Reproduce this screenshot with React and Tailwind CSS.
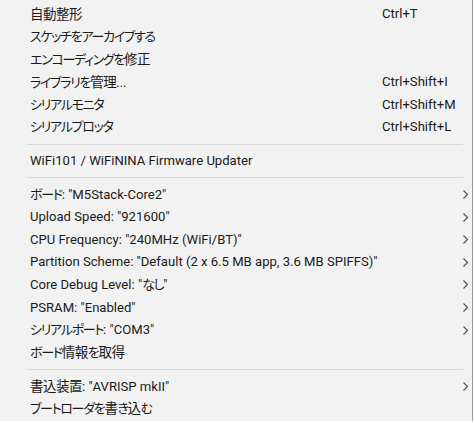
import React from 'react';

const ChevronRight = () => (
  <svg width="7" height="11" viewBox="0 0 7 11" fill="none" stroke="#555" strokeWidth="1.2">
    <path d="M1.5 1.5l4 4-4 4" />
  </svg>
);

// 仮名は詰めて、漢字は少しだけ詰める（Yu Gothic UI 風に）
const Label = ({ text }) =>
  text.split(/([\u3040-\u30ff]+|[\u4e00-\u9fff]+)/).map((part, i) => {
    if (/^[\u3040-\u30ff]+$/.test(part)) {
      return <span key={i} className="text-[13px] tracking-[-1.3px]">{part}</span>;
    }
    if (/^[\u4e00-\u9fff]+$/.test(part)) {
      return <span key={i} className="text-[13.5px] tracking-[-0.5px]">{part}</span>;
    }
    return part;
  });

const Item = ({ label, shortcut, submenu }) => (
  <div className="flex h-[22.6px] items-center pl-[30px] pr-[2px]">
    <span className="flex-1 whitespace-nowrap"><Label text={label} /></span>
    {shortcut && <span className="w-[88px] whitespace-nowrap">{shortcut}</span>}
    {submenu && <span className="flex w-[8px] items-center"><ChevronRight /></span>}
  </div>
);

const Sep = () => (
  <div className="flex h-[11px] items-center pl-[27px] pr-[9px]">
    <div className="h-px w-full bg-[#d9d9d9]" />
  </div>
);

export default function App() {
  return (
    <div className="h-[423px] w-[474px] bg-white">
      <div
        className="h-[421px] w-[473px] border-r border-[#9a9a9a] bg-[#f2f2f2] pt-[3px] text-[13.1px] text-[#1a1a1a] [font-feature-settings:'palt']"
        style={{ fontFamily: 'Roboto, "Noto Sans CJK JP", sans-serif' }}
      >
        <Item label="自動整形" shortcut="Ctrl+T" />
        <Item label="スケッチをアーカイブする" />
        <Item label="エンコーディングを修正" />
        <Item label="ライブラリを管理..." shortcut="Ctrl+Shift+I" />
        <Item label="シリアルモニタ" shortcut="Ctrl+Shift+M" />
        <Item label="シリアルプロッタ" shortcut="Ctrl+Shift+L" />
        <Sep />
        <Item label="WiFi101 / WiFiNINA Firmware Updater" />
        <Sep />
        <Item label='ボード: "M5Stack-Core2"' submenu />
        <Item label='Upload Speed: "921600"' submenu />
        <Item label='CPU Frequency: "240MHz (WiFi/BT)"' submenu />
        <Item label='Partition Scheme: "Default (2 x 6.5 MB app, 3.6 MB SPIFFS)"' submenu />
        <Item label='Core Debug Level: "なし"' submenu />
        <Item label='PSRAM: "Enabled"' submenu />
        <Item label='シリアルポート: "COM3"' submenu />
        <Item label="ボード情報を取得" />
        <Sep />
        <Item label='書込装置: "AVRISP mkII"' submenu />
        <Item label="ブートローダを書き込む" />
      </div>
    </div>
  );
}
